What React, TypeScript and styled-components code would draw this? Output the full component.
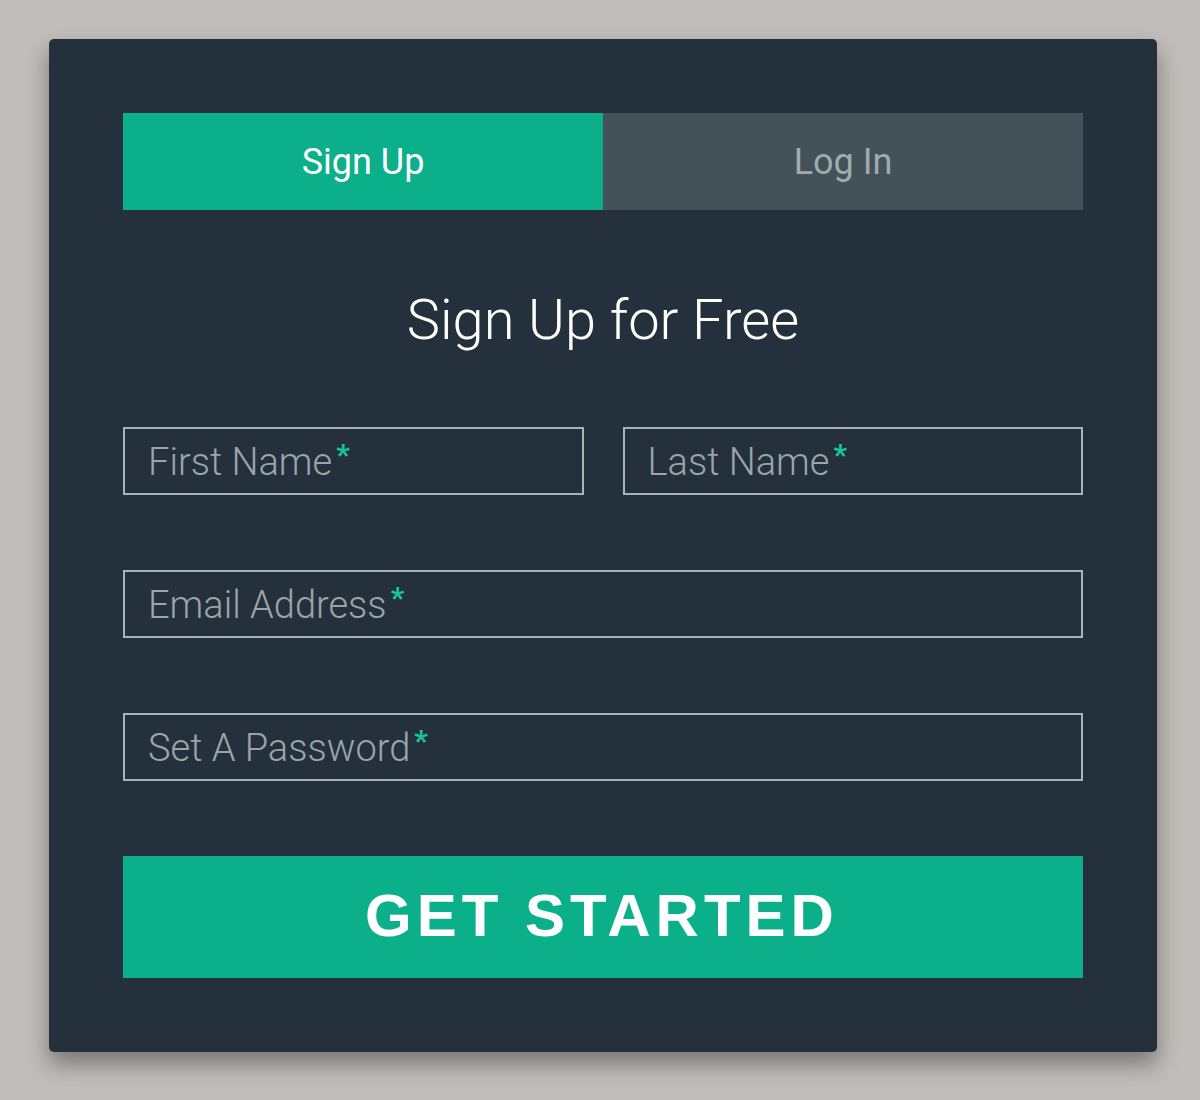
import { useState } from 'react'
import styled, { createGlobalStyle } from 'styled-components'

const Global = createGlobalStyle`
  html, body {
    margin: 0;
    padding: 0;
    background: #c0bdba;
  }
  body {
    font-family: Roboto, "Open Sans", sans-serif;
  }
  * { box-sizing: border-box; }
`

const Page = styled.div`
  width: 1200px;
  height: 1100px;
  padding: 39px 43px 0 49px;
`

const Card = styled.div`
  width: 1108px;
  background: #24303c;
  border-radius: 5px;
  padding: 74px;
  box-shadow: 0 12px 22px rgba(40, 36, 34, 0.45);
`

const Tabs = styled.div`
  display: flex;
  height: 97px;
`

const Tab = styled.button<{ $active?: boolean }>`
  flex: 1;
  border: 0;
  margin: 0;
  cursor: pointer;
  font-family: inherit;
  font-size: 36px;
  font-weight: 400;
  background: ${(p) => (p.$active ? '#0bb08b' : '#435158')};
  color: ${(p) => (p.$active ? '#ffffff' : '#a0abad')};
`

const Title = styled.h1`
  margin: 80px 0 77px;
  text-align: center;
  color: #ffffff;
  font-weight: 300;
  font-size: 56px;
  line-height: 60px;
`

const Row = styled.div`
  display: flex;
  gap: 39px;
  margin-bottom: 75px;
`

const Field = styled.label`
  position: relative;
  flex: 1;
  display: flex;
  align-items: center;
  height: 68px;
  border: 2px solid #a5b4b4;
  padding: 0 23px;
`

const Input = styled.input`
  width: 100%;
  background: transparent;
  border: 0;
  outline: none;
  color: #ffffff;
  font-family: inherit;
  font-size: 38px;
  font-weight: 300;
  padding: 0;
`

const Placeholder = styled.span`
  position: absolute;
  left: 23px;
  top: 50%;
  transform: translateY(-52%);
  color: #9aa5a8;
  font-size: 38px;
  font-weight: 300;
  pointer-events: none;
`

const Req = styled.span`
  color: #17c59b;
  font-size: 30px;
  font-weight: 700;
  vertical-align: 10px;
  margin-left: 4px;
`

const Submit = styled.button`
  display: block;
  width: 100%;
  height: 122px;
  border: 0;
  margin: 0;
  cursor: pointer;
  background: #0bb08b;
  color: #ffffff;
  font-family: "Liberation Sans", Arial, sans-serif;
  font-weight: 700;
  font-size: 60px;
  letter-spacing: 5px;
  padding: 0 2px 4px 0;
`

function TextField({ label, type = 'text' }: { label: string; type?: string }) {
  const [value, setValue] = useState('')
  return (
    <Field>
      <Input type={type} value={value} onChange={(e) => setValue(e.target.value)} />
      {!value && (
        <Placeholder>
          {label}
          <Req>*</Req>
        </Placeholder>
      )}
    </Field>
  )
}

export default function App() {
  const [tab, setTab] = useState<'signup' | 'login'>('signup')
  return (
    <Page>
      <Global />
      <Card>
        <Tabs>
          <Tab $active={tab === 'signup'} onClick={() => setTab('signup')}>
            Sign Up
          </Tab>
          <Tab $active={tab === 'login'} onClick={() => setTab('login')}>
            Log In
          </Tab>
        </Tabs>
        <Title>Sign Up for Free</Title>
        <Row>
          <TextField label="First Name" />
          <TextField label="Last Name" />
        </Row>
        <Row>
          <TextField label="Email Address" type="email" />
        </Row>
        <Row>
          <TextField label="Set A Password" type="password" />
        </Row>
        <Submit>GET STARTED</Submit>
      </Card>
    </Page>
  )
}
